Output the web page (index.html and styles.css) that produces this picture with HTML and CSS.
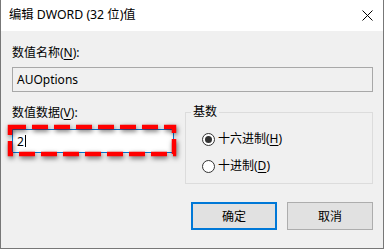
FILE: index.html
```html
<!DOCTYPE html>
<html>
<head>
<meta charset="utf-8">
<link rel="stylesheet" href="styles.css">
</head>
<body>
<div class="window">
  <div class="titlebar">
    <span class="title">编辑 DWORD (32 位)值</span>
    <svg class="close" width="11" height="11" viewBox="0 0 11 11"><path d="M0.5 0.5 L10.5 10.5 M10.5 0.5 L0.5 10.5" stroke="#000" stroke-width="1" fill="none"/></svg>
  </div>
  <div class="content">
    <div class="label first">数值名称(<u>N</u>):</div>
    <div class="field readonly">AUOptions</div>
    <div class="row">
      <div class="leftcol">
        <div class="label">数值数据(<u>V</u>):</div>
        <div class="inputwrap">
          <div class="field edit"><span>2</span><span class="caret"></span></div>
          <svg class="mark" width="186" height="49" viewBox="0 0 186 49">
            <rect x="10" y="10" width="164" height="27" fill="none" stroke="#ff0000" stroke-width="4.5" stroke-dasharray="16 6"/>
          </svg>
        </div>
      </div>
      <fieldset class="group">
        <legend>基数</legend>
        <div class="radios">
          <div class="radio"><span class="circle checked"></span><span>十六进制(<u>H</u>)</span></div>
          <div class="radio"><span class="circle"></span><span>十进制(<u>D</u>)</span></div>
        </div>
      </fieldset>
    </div>
    <div class="buttons">
      <div class="btn default">确定</div>
      <div class="btn">取消</div>
    </div>
  </div>
</div>
</body>
</html>
```

FILE: styles.css
```css
html, body {
  margin: 0;
  padding: 0;
  background: #ffffff;
}
body {
  font-family: "Noto Sans", "Noto Sans CJK SC", sans-serif;
  font-size: 12px;
  color: #000;
  width: 385px;
  height: 251px;
  overflow: hidden;
}
.window {
  width: 382px;
  height: 248px;
  border-left: 1px solid #777777;
  border-right: 1px solid #777777;
  border-bottom: 1px solid #777777;
  background: #f0f0f0;
  display: flex;
  flex-direction: column;
}
.titlebar {
  height: 31px;
  background: #ffffff;
  display: flex;
  align-items: center;
  justify-content: space-between;
  padding: 0 10px 0 8px;
  flex-shrink: 0;
}
.title {
  line-height: 16px;
  margin-top: -1px;
  font-size: 12.3px;
}
.close {
  display: block;
}
.content {
  padding: 0 10px 0 11px;
  display: flex;
  flex-direction: column;
}
.label {
  line-height: 16px;
  height: 16px;
}
.label.first {
  margin-top: 14px;
}
u {
  text-decoration-thickness: 1px;
  text-underline-offset: 2px;
}
.field {
  box-sizing: border-box;
  display: flex;
  align-items: center;
  padding-left: 4px;
}
.readonly {
  margin-top: 6px;
  height: 25px;
  border: 1px solid #a8a8a8;
  background: #f0f0f0;
}
.row {
  display: grid;
  grid-template-columns: 162px 188px;
  column-gap: 11px;
  margin-top: 13px;
  align-items: start;
}
.leftcol {
  display: flex;
  flex-direction: column;
}
.inputwrap {
  position: relative;
  margin-top: 8px;
}
.edit {
  height: 24px;
  border: 1px solid #0078d7;
  background: #ffffff;
}
.caret {
  display: inline-block;
  width: 1px;
  height: 12px;
  background: #000;
  margin-left: 1px;
}
.mark {
  position: absolute;
  left: -12px;
  top: -12px;
  overflow: visible;
  filter: drop-shadow(1.5px 2px 2.5px rgba(0,0,0,0.6));
}
.group {
  margin: 0;
  padding: 0;
  border: 1px solid #dcdcdc;
  height: 80px;
  box-sizing: border-box;
  min-inline-size: 0;
  margin-top: -1px;
}
.group legend {
  padding: 0 2px;
  margin-left: 5px;
  line-height: 16px;
}
.radios {
  padding: 9px 0 0 16px;
}
.radio {
  display: flex;
  align-items: center;
  height: 20px;
  margin-bottom: 7px;
  line-height: 16px;
}
.circle {
  box-sizing: border-box;
  width: 13px;
  height: 13px;
  border: 1px solid #333333;
  border-radius: 50%;
  background: #ffffff;
  margin-right: 3px;
  display: flex;
  align-items: center;
  justify-content: center;
  flex-shrink: 0;
}
.circle.checked::after {
  content: "";
  width: 7px;
  height: 7px;
  border-radius: 50%;
  background: #333333;
}
.buttons {
  display: flex;
  justify-content: flex-end;
  gap: 10px;
  margin-top: 18px;
}
.btn {
  box-sizing: border-box;
  width: 86px;
  height: 28px;
  border: 1px solid #adadad;
  background: #e1e1e1;
  display: flex;
  align-items: center;
  justify-content: center;
}
.btn.default {
  border: 2px solid #0078d7;
}
```
